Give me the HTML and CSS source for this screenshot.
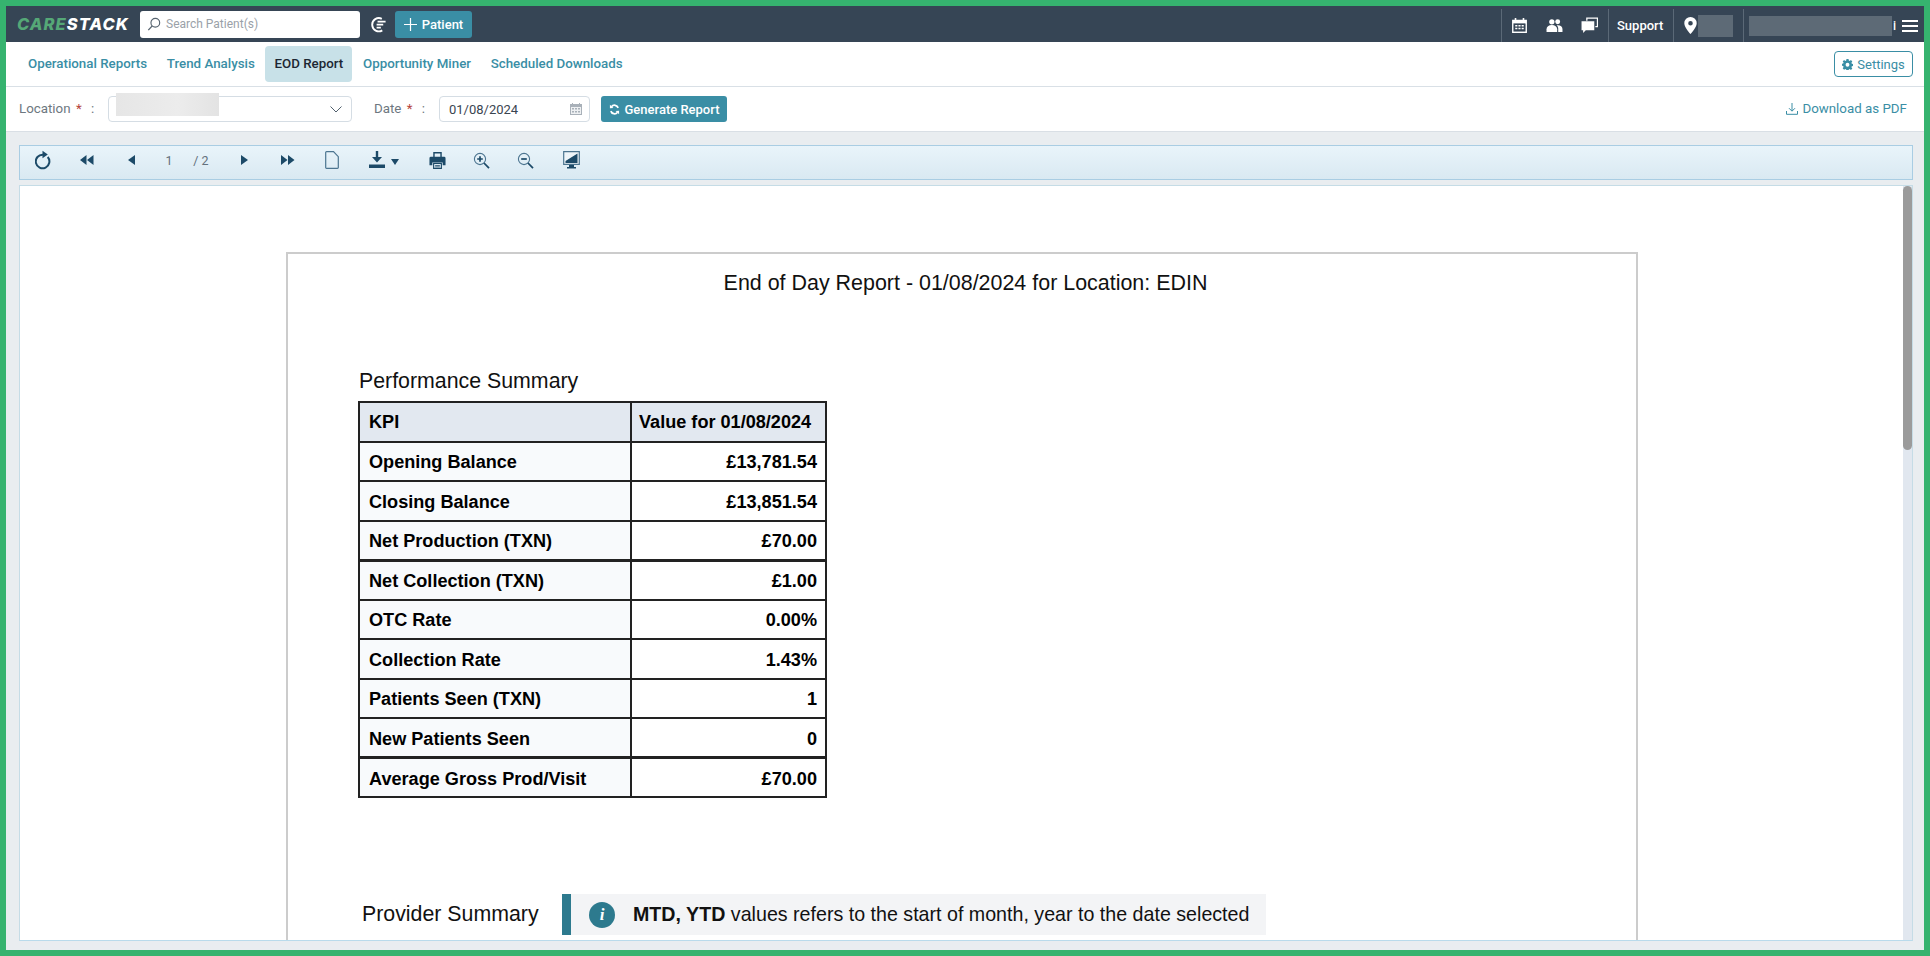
FILE: index.html
```html
<!DOCTYPE html>
<html lang="en">
<head>
<meta charset="utf-8">
<title>EOD Report</title>
<link rel="stylesheet" href="styles.css">
</head>
<body>
<div class="app">
  <header class="topbar">
    <div class="logo"><span class="logo-green">CARE</span>STACK</div>
    <div class="search">
      <svg class="search-icon" viewBox="0 0 16 16"><circle cx="9.5" cy="6.5" r="5" fill="none" stroke="#56636f" stroke-width="1.3"/><path d="M6 10.2 1.5 15" stroke="#56636f" stroke-width="1.5" fill="none"/></svg>
      <span>Search Patient(s)</span>
    </div>
    <svg class="quick-icon" viewBox="0 0 18 18"><path d="M12.5 3A7 7 0 1 0 13 15.2" fill="none" stroke="#fff" stroke-width="2"/><path d="M8 6h8.5M7 9.2h7M7 12.4h4.5" stroke="#fff" stroke-width="1.8" fill="none"/></svg>
    <button class="add-patient"><svg class="plus" viewBox="0 0 13 13"><path d="M6.5 0v13M0 6.5h13" stroke="#fff" stroke-width="1.2"/></svg>Patient</button>
    <div class="top-right">
      <div class="top-group icons">
        <svg class="top-icon" viewBox="0 0 16 16"><path fill="#fff" d="M1 2.5h2.5V1h1.5v1.5h6V1h1.500v1.500H15V15H1z"/><path fill="#364555" d="M2.300 6h11.400v7.700H2.300z"/><path fill="#fff" d="M4 7.500h2v1.500H4zM7 7.500h2v1.500H7zM10 7.500h2v1.500h-2zM4 10h2v1.500H4zM7 10h2v1.500H7zM10 10h2v1.500h-2z"/></svg>
        <svg class="top-icon" viewBox="0 0 16 16"><circle cx="5.500" cy="4.500" r="2.500" fill="#fff"/><circle cx="11" cy="4.500" r="2.300" fill="#fff"/><path fill="#fff" d="M.5 14v-2.500c0-2.500 2-4 5-4s5 1.500 5 4V14z"/><path fill="#fff" d="M11.500 14v-3c0-1.300-.5-2.400-1.500-3.200 3.200-.5 5.500 1 5.500 3.500V14z"/></svg>
        <svg class="top-icon" viewBox="0 0 16 16"><path fill="none" stroke="#fff" stroke-width="1.200" d="M5.500 3.500v-2.500h10v8h-2"/><path fill="#fff" d="M.5 4h12v8.500H4.500L2 15v-2.500H.5z"/></svg>
      </div>
      <div class="top-group support">Support</div>
      <div class="top-group location">
        <svg class="pin" viewBox="0 0 13 17"><path fill="#fff" fill-rule="evenodd" d="M6.500 0a6.200 6.200 0 0 1 6.200 6.200C12.700 10.500 6.500 17 6.500 17S.3 10.500.3 6.200A6.200 6.200 0 0 1 6.500 0zm0 4a2.300 2.300 0 1 0 0 4.600 2.300 2.300 0 0 0 0-4.600z"/></svg>
        <div class="redact redact-loc"></div>
      </div>
      <div class="top-group user">
        <div class="redact redact-user"></div>
        <span class="user-tail">i</span>
        <div class="burger"><i></i><i></i><i></i></div>
      </div>
    </div>
  </header>

  <nav class="tabs">
    <a class="tab">Operational Reports</a>
    <a class="tab">Trend Analysis</a>
    <a class="tab active">EOD Report</a>
    <a class="tab">Opportunity Miner</a>
    <a class="tab">Scheduled Downloads</a>
    <button class="settings">
      <svg class="gear" viewBox="0 0 16 16"><path fill="#3a8ea5" fill-rule="evenodd" d="M6.500 0h3l.4 2.200 1.300.6L13 1.500l2 2.200-1.300 1.800.6 1.300 2.200.4v3l-2.200.4-.6 1.300 1.300 1.800-2 2.200-1.800-1.300-1.300.5-.4 2.200h-3l-.4-2.200-1.300-.5L3 15.600l-2-2.200 1.300-1.800-.6-1.300L0 9.900v-3l1.700-.4.600-1.300L1 3.700l2-2.200 1.800 1.300 1.300-.6zM8 5.500a2.800 2.800 0 1 0 0 5.600 2.800 2.800 0 0 0 0-5.600z"/></svg>
      Settings
    </button>
  </nav>

  <section class="filters">
    <label class="flabel loc-label">Location <em>*</em> <span class="colon">:</span></label>
    <div class="select">
      <div class="redact-select"></div>
      <svg class="chevron" viewBox="0 0 12 7"><path d="M.5.500 6 6 11.500.500" fill="none" stroke="#51606d" stroke-width="1"/></svg>
    </div>
    <label class="flabel date-label">Date <em>*</em> <span class="colon">:</span></label>
    <div class="date-input">
      <span>01/08/2024</span>
      <svg class="cal" viewBox="0 0 12 12"><path fill="#a9b1b9" d="M0 1h2V0h1v1h6V0h1v1h2v11H0z"/><path fill="#eef0f2" d="M1 4h10v7H1z"/><path fill="#a9b1b9" d="M2 5h2v1.500H2zM5 5h2v1.500H5zM8 5h2v1.500H8zM2 8h2v1.500H2zM5 8h2v1.500H5zM8 8h2v1.500H8z"/></svg>
    </div>
    <button class="generate">
      <svg class="sync" viewBox="0 0 12 12"><path fill="none" stroke="#fff" stroke-width="1.900" d="M10 4.200A4.200 4.200 0 0 0 2.700 3M2 7.800A4.200 4.200 0 0 0 9.300 9"/><path fill="#fff" d="M1 .8 4.800 4.400 1 4.700zM11 11.200 7.200 7.600 11 7.300z"/></svg>
      Generate Report
    </button>
    <a class="download">
      <svg class="dl" viewBox="0 0 12 12"><path d="M6 0v8M3 5.200 6 8.200 9 5.200M.5 8v3.300h11V8" fill="none" stroke="#3a8ea5" stroke-width="1"/></svg>
      Download as PDF
    </a>
  </section>

  <main class="content">
    <div class="toolbar">
      <span class="tool"><svg class="t-refresh" viewBox="0 0 16 20"><path d="M12.700 7A6.800 6.800 0 1 1 8 4.700" fill="none" stroke="#1c4a68" stroke-width="2"/><path fill="#1c4a68" d="M7.500 .8 12.800 4.600 7.500 8.200z"/></svg></span>
      <span class="tool"><svg class="t-arrow" viewBox="0 0 14 10"><path fill="#1c4a68" d="M6.500 0v10L0 5zM13.500 0v10L7 5z"/></svg></span>
      <span class="tool"><svg class="t-arrow1" viewBox="0 0 7 10"><path fill="#1c4a68" d="M7 0v10L0 5z"/></svg></span>
      <span class="page-cur">1</span>
      <span class="page-total">/ 2</span>
      <span class="tool tool-next"><svg class="t-arrow1" viewBox="0 0 7 10"><path fill="#1c4a68" d="M0 0v10l7-5z"/></svg></span>
      <span class="tool"><svg class="t-arrow" viewBox="0 0 14 10"><path fill="#1c4a68" d="M0 0v10l6.500-5zM7 0v10l6.500-5z"/></svg></span>
      <span class="tool"><svg class="t-page" viewBox="0 0 14 18"><path d="M1.500.700h7l4.800 5v10.800a.8.800 0 0 1-.8.800h-11a.8.800 0 0 1-.8-.8V1.500a.8.800 0 0 1 .8-.8z" fill="none" stroke="#4c7590" stroke-width="1.200"/></svg></span>
      <span class="tool tool-dl"><svg class="t-dl" viewBox="0 0 30 18"><path fill="#1c4a68" d="M6.800 0h2.400v6H13l-5 5.500L3 6h3.800zM0 13.500h16V17H0z"/><path fill="#1c4a68" d="M22 8h8l-4 6z"/></svg></span>
      <span class="tool"><svg class="t-print" viewBox="0 0 17 18"><path fill="#1c4a68" d="M4 0h9v5h-1.500V1.500h-6V5H4zM0 6.500A1.500 1.500 0 0 1 1.500 5h14A1.500 1.500 0 0 1 17 6.500V14h-3v-3H3v3H0z"/><path fill="#1c4a68" d="M3.800 11.500h9.400V18H3.800z"/><path fill="#dcebf3" d="M5 12.700h7v4H5z"/><path fill="#1c4a68" d="M6 13.800h5v.8H6zM6 15.300h5v.8H6z"/></svg></span>
      <span class="tool"><svg class="t-zoom" viewBox="0 0 17 17"><circle cx="7" cy="7" r="5.600" fill="none" stroke="#4c7590" stroke-width="1.100"/><path d="M4.200 7h5.600M7 4.200v5.600" stroke="#1c4a68" stroke-width="1.700"/><path d="M11 11l5 5.200" stroke="#1c4a68" stroke-width="1.800"/></svg></span>
      <span class="tool"><svg class="t-zoom" viewBox="0 0 17 17"><circle cx="7" cy="7" r="5.600" fill="none" stroke="#4c7590" stroke-width="1.100"/><path d="M4.200 7h5.600" stroke="#1c4a68" stroke-width="1.700"/><path d="M11 11l5 5.200" stroke="#1c4a68" stroke-width="1.800"/></svg></span>
      <span class="tool tool-monitor"><svg class="t-monitor" viewBox="0 0 17 18"><path d="M.7.700h15.600v12.600H.7z" fill="#eef5f9" stroke="#4c7590" stroke-width="1.200"/><path fill="#1c4a68" d="M2.500 12V10L14.500 2.500V12zM6 14h5v2h2v1.500H4V16h2z"/></svg></span>
    </div>

    <div class="viewer">
      <div class="doc">
        <article class="page">
          <h1 class="report-title">End of Day Report - 01/08/2024 for Location: EDIN</h1>
          <h2 class="section-title">Performance Summary</h2>
          <table class="kpi">
            <thead>
              <tr><th class="kpi-name">KPI</th><th class="kpi-head">Value for 01/08/2024</th></tr>
            </thead>
            <tbody>
              <tr><td class="kpi-name">Opening Balance</td><td>£13,781.54</td></tr>
              <tr><td class="kpi-name">Closing Balance</td><td>£13,851.54</td></tr>
              <tr class="thick"><td class="kpi-name">Net Production (TXN)</td><td>£70.00</td></tr>
              <tr><td class="kpi-name">Net Collection (TXN)</td><td>£1.00</td></tr>
              <tr><td class="kpi-name">OTC Rate</td><td>0.00%</td></tr>
              <tr><td class="kpi-name">Collection Rate</td><td>1.43%</td></tr>
              <tr><td class="kpi-name">Patients Seen (TXN)</td><td>1</td></tr>
              <tr class="thick"><td class="kpi-name">New Patients Seen</td><td>0</td></tr>
              <tr><td class="kpi-name">Average Gross Prod/Visit</td><td>£70.00</td></tr>
            </tbody>
          </table>
          <div class="provider-row">
            <h2 class="provider-title">Provider Summary</h2>
            <div class="note">
              <span class="info">i</span>
              <p><strong>MTD, YTD</strong> values refers to the start of month, year to the date selected</p>
            </div>
          </div>
        </article>
      </div>
      <div class="scrolltrack"><div class="scrollthumb"></div></div>
    </div>
  </main>
</div>
</body>
</html>
```
FILE: styles.css
```css
* { box-sizing: border-box; }
html, body { margin: 0; height: 100%; overflow: hidden; }
body { background: #36b36f; padding: 6px; font-family: Roboto, "Liberation Sans", sans-serif; }
.app { height: 944px; display: flex; flex-direction: column; background: #fff; overflow: hidden; }

.topbar { height: 36px; background: #364555; display: flex; align-items: center; flex: none; position: relative; padding-left: 11px; }
.logo { width: 123px; font-family: Inter, sans-serif; font-weight: 800; font-style: italic; font-size: 16.500px; letter-spacing: 1.050px; color: #fff; white-space: nowrap; }
.logo-green { color: #55a877; }
.search { width: 220px; height: 27px; background: #fff; border-radius: 3px; display: flex; align-items: center; padding-left: 7px; font-size: 12px; color: #9aa1a8; }
.search-icon { width: 14px; height: 14px; margin-right: 5px; }
.quick-icon { width: 17px; height: 17px; margin-left: 10px; }
.add-patient { margin-left: 8px; width: 77px; height: 27px; border: 0; border-radius: 3px; background: #3a8ea5; color: #fff; font: 500 13px Roboto, sans-serif; display: flex; align-items: center; justify-content: center; padding: 0; }
.plus { width: 13px; height: 13px; margin-right: 5px; }
.top-right { margin-left: auto; display: flex; height: 100%; align-items: stretch; padding: 3px 0 0; }
.top-group { display: flex; align-items: center; border-left: 1px solid #5b6977; height: 33px; color: #fff; font-size: 13px; font-weight: 500; }
.icons { width: 107px; padding-left: 9px; gap: 18px; }
.top-icon { width: 17px; height: 17px; }
.support { width: 65px; padding-left: 8px; }
.location { width: 70px; padding-left: 10px; }
.pin { width: 13px; height: 17px; flex: none; margin-right: 1px; }
.redact { background: #5d6a76; }
.redact-loc { width: 35px; height: 22px; }
.user { width: 181px; padding-left: 5px; position: relative; }
.redact-user { width: 143px; height: 20px; }
.user-tail { margin-left: 1px; width: 9px; font-size: 12px; }
.burger { width: 16px; display: flex; flex-direction: column; gap: 3px; }
.burger i { display: block; height: 2px; background: #fff; }

.tabs { height: 45px; display: flex; align-items: center; padding-left: 13px; border-bottom: 1px solid #d9e0e6; flex: none; padding-right: 11px; }
.tab { font-size: 13.330px; font-weight: 500; color: #3a8ea5; height: 36px; padding: 0 9px; margin-right: 1.700px; line-height: 36px; border-radius: 4px; white-space: nowrap; }
.tab.active { background: #c8e1e8; color: #1c2733; }
.settings { margin-left: auto; width: 79px; height: 26px; border: 1px solid #3a8ea5; border-radius: 4px; background: #fff; color: #3a8ea5; font: 400 13px Roboto, sans-serif; display: flex; align-items: center; justify-content: center; padding: 0; gap: 4px; }
.gear { width: 11px; height: 11px; }

.filters { height: 45px; display: flex; align-items: center; padding-left: 13px; border-bottom: 1px solid #d9dfe5; flex: none; font-size: 13.330px; color: #6d7780; }
.flabel { margin-top: -1px; }
.flabel em { color: #b5453c; font-style: normal; margin-left: 2px; }
.colon { margin-left: 6px; }
.loc-label { width: 89px; }
.date-label { width: 65px; margin-left: 22px; }
.select { width: 244px; height: 26px; border: 1px solid #d5dde4; border-radius: 4px; position: relative; display: flex; align-items: center; justify-content: flex-end; padding-right: 9px; }
.redact-select { position: absolute; left: 7px; top: -4px; width: 103px; height: 23px; background: linear-gradient(90deg, #e6e6e6, #ececec 60%, #e3e3e3); }
.chevron { width: 12px; height: 7px; }
.date-input { width: 151px; height: 26px; border: 1px solid #d5dde4; border-radius: 4px; display: flex; align-items: center; justify-content: space-between; padding: 0 7px 0 9px; color: #3a4550; font-size: 13px; }
.cal { width: 12px; height: 12px; }
.generate { margin-left: 11px; width: 126px; height: 26px; border: 0; border-radius: 3px; background: #3a8ea5; color: #fff; font: 500 13px Roboto, sans-serif; display: flex; align-items: center; justify-content: center; gap: 5px; padding: 0; }
.sync { width: 11px; height: 11px; }
.download { margin-left: auto; margin-right: 17px; display: flex; align-items: center; gap: 4px; color: #3a8ea5; font-size: 13.330px; margin-top: -1px; }
.dl { width: 12px; height: 12px; }

.content { flex: 1; min-height: 0; background: #e9edf0; padding: 13px 11px 9px 13px; display: flex; flex-direction: column; }
.toolbar { height: 35px; flex: none; border: 1px solid #a9cde3; background: linear-gradient(#e9f4fa, #d9e9f2); display: flex; align-items: center; padding: 0 0 5px 1px; }
.tool { width: 44px; flex: none; display: flex; align-items: center; justify-content: center; }
.tool-next { margin-left: 5px; }
.tool-monitor { margin-left: 2px; }
.t-refresh { width: 16px; height: 20px; }
.t-arrow { width: 14px; height: 10px; }
.t-arrow1 { width: 7px; height: 10px; }
.t-page { width: 14px; height: 18px; }
.t-dl { width: 30px; height: 18px; margin-left: 16px; flex: none; }
.tool-dl + .tool { margin-left: 17px; }
.t-print { width: 17px; height: 17px; }
.t-zoom { width: 17px; height: 17px; }
.t-monitor { width: 17px; height: 18px; display: block; }
.page-cur, .page-total { font-size: 12.500px; color: #63717c; flex: none; text-align: center; }
.page-cur { width: 32px; }
.page-total { width: 32px; }

.viewer { flex: 1; min-height: 0; margin-top: 5px; background: #fff; border: 1px solid #c5dce6; border-bottom: 1px solid #b9dbeb; display: flex; overflow: hidden; }
.doc { flex: 1; min-width: 0; padding: 66px 0 0 266px; overflow: hidden; }
.page { width: 1352px; height: 900px; border: 2px solid #ccc; background: #fff; font-family: "Liberation Sans", Arial, sans-serif; color: #111; }
.report-title { margin: 17px 0 0; padding-left: 7px; font-size: 21.450px; font-weight: 400; text-align: center; line-height: 24px; }
.section-title { margin: 74px 0 0 71px; font-size: 21.330px; font-weight: 400; line-height: 24px; }
.kpi { margin: 8px 0 0 70px; border-collapse: collapse; border: 2px solid #111; table-layout: fixed; width: 469px; font-size: 18.130px; font-weight: 700; }
.kpi th, .kpi td { border: 2px solid #222; height: 39.500px; padding: 0 8px; text-align: right; color: #000; white-space: nowrap; }
.kpi tbody td { padding-top: 3px; }
.kpi th { background: #e2e8f0; padding-top: 1px; }
.kpi .kpi-name { width: 272px; text-align: left; background: #f8fafc; padding-left: 9px; }
.kpi th.kpi-name { background: #e2e8f0; }
.kpi th.kpi-head { text-align: left; padding: 1px 7px 0; }
.kpi .thick td { border-bottom-width: 3px; }
.provider-row { display: flex; align-items: center; margin: 96px 0 0 74px; }
.provider-title { margin: 0; width: 200px; font-size: 21.330px; font-weight: 400; }
.note { display: flex; align-items: center; width: 704px; height: 41px; background: #f3f4f6; border-left: 9px solid #2d7a8e; padding-left: 18px; }
.info { width: 26px; height: 26px; border-radius: 50%; background: #2d7a8e; color: #fff; font: italic 700 17px/26px "Liberation Serif", serif; text-align: center; flex: none; }
.note p { margin: 0 0 0 18px; font-size: 19.650px; white-space: nowrap; color: #111; }
.scrolltrack { width: 9px; flex: none; background: #e1e7ef; }
.scrollthumb { width: 100%; height: 264px; border-radius: 5px; background: #9b9b9b; }
```
